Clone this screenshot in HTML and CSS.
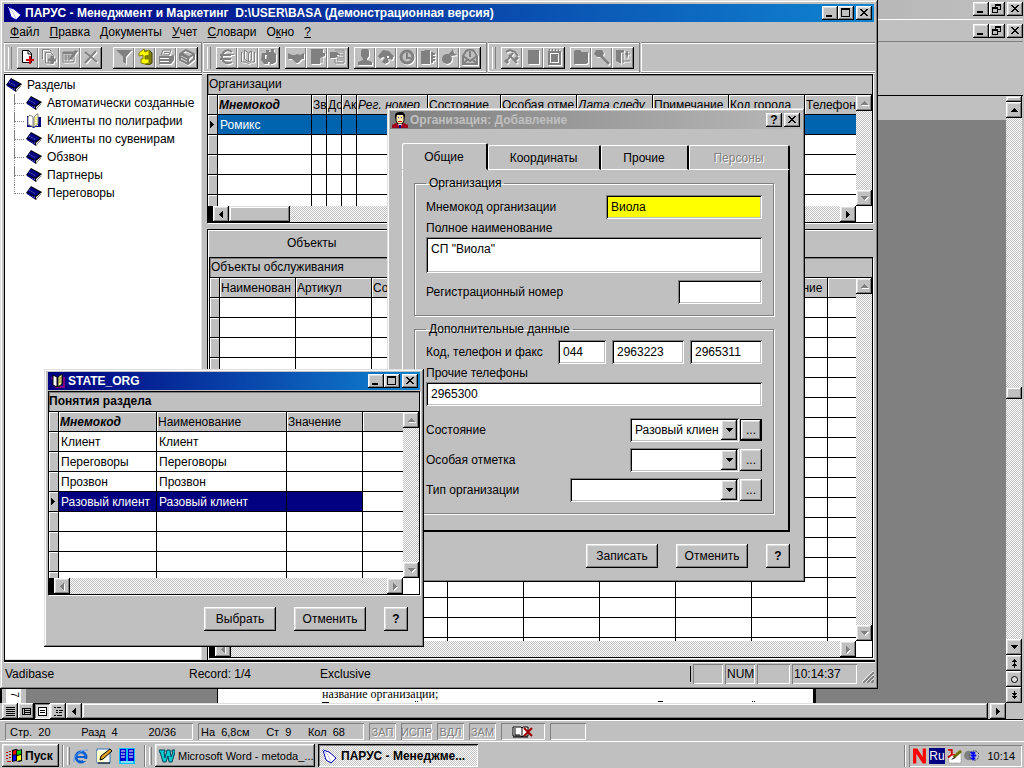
FILE: index.html
```html
<!DOCTYPE html>
<html lang="ru">

<head>
    <meta charset="UTF-8">
    <meta name="viewport" content="width=device-width, initial-scale=1.0">
    <title>ПАРУС - Менеджмент и Маркетинг</title>
    <link rel="stylesheet" href="styles.css">
</head>

<body>
    <svg class="sprite" aria-hidden="true">
        <symbol id="i-up" viewBox="0 0 7 4"><path d="M3 0h1v1h1v1h1v1h1v1H0V3h1V2h1V1h1z" /></symbol>
        <symbol id="i-down" viewBox="0 0 7 4"><path d="M0 0h7v1H6v1H5v1H4v1H3V3H2V2H1V1H0z" /></symbol>
        <symbol id="i-left" viewBox="0 0 4 7"><path d="M4 0v7H3V6H2V5H1V4H0V3h1V2h1V1h1V0z" /></symbol>
        <symbol id="i-right" viewBox="0 0 4 7"><path d="M0 0h1v1h1v1h1v1h1v1H3v1H2v1H1v1H0z" /></symbol>
        <symbol id="i-min" viewBox="0 0 10 10"><path d="M1 7h6v2H1z" /></symbol>
        <symbol id="i-max" viewBox="0 0 10 10"><path d="M0 0h9v9H0zM1 2v6h7V2z" fill-rule="evenodd" /></symbol>
        <symbol id="i-restore" viewBox="0 0 10 10"><path d="M3 0h6v6H6v3H0V3h3zM4 2v1h2v2h2V2zM1 5v3h4V5z" fill-rule="evenodd" /></symbol>
        <symbol id="i-close" viewBox="0 0 10 10"><path d="M1 1h2v1h1v1h2V2h1V1h2v1H8v1H7v1H6v1h1v1h1v1h1v1H7V7H6V6H4v1H3v1H1V7h1V6h1V5h1V4H3V3H2V2H1z" /></symbol>
        <symbol id="i-book" viewBox="0 0 16 16">
            <path d="M5 1L16 7L10 15L0 8z" fill="#000" />
            <path d="M5 2L14 7L9 11L1 7z" fill="#000080" />
            <path d="M1 8L9 12V14L1 9z" fill="#0000a0" />
            <path d="M10 12L15 8V10L10 14z" fill="#fff" />
            <path d="M3 5L10 9M6 12h3" stroke="#8080c0" stroke-dasharray="1 1" />
            <path d="M11 13L15 9" stroke="#808080" />
        </symbol>
        <symbol id="i-openbook" viewBox="0 0 16 16">
            <path d="M1 3h3v10h8V4h3v10H9l-1 1H7l-1-1H1z" fill="#000080" />
            <path d="M2 4L4 2L7 4V14L4 12H2z" fill="#fff" stroke="#808080" />
            <path d="M8 4L11 1H12V11L8 14z" fill="#ffffc0" stroke="#808080" />
            <path d="M10 4v7" stroke="#e0d000" stroke-dasharray="1 1" />
        </symbol>
        <symbol id="i-sail" viewBox="0 0 16 16">
            <path d="M1 2l6 2 7 6-5 5-5-3z" fill="#fff" stroke="#0000c0" />
            <path d="M1 2l5 5M6 7l3 7" stroke="#c0c0ff" fill="none" />
        </symbol>
    </svg>

    <div class="desktop">
        <!-- Word in the background -->
        <div class="word">
            <div class="word-title">
                <span class="win-btns">
                    <button aria-label="Свернуть"><svg><use href="#i-min" /></svg></button><button aria-label="Восстановить"><svg><use href="#i-restore" /></svg></button><button aria-label="Закрыть"><svg><use href="#i-close" /></svg></button>
                </span>
            </div>
            <div class="word-menu">
                <span class="win-btns">
                    <button aria-label="Свернуть документ"><svg><use href="#i-min" /></svg></button><button aria-label="Восстановить документ"><svg><use href="#i-restore" /></svg></button><button aria-label="Закрыть документ"><svg><use href="#i-close" /></svg></button>
                </span>
            </div>
            <div class="word-tools"></div>
            <div class="word-main">
                <div class="word-doc">
                    <div class="word-ruler-h"></div>
                    <div class="word-canvas">
                        <div class="word-ruler-v">7</div>
                        <div class="word-page">
                            <p>название организации;</p>
                            <svg class="word-next" viewBox="0 0 440 2"><path d="M0 1h7v1H0zM93 0h1v1h-1zM95 0h1v1h-1zM336 0h5v1h-5zM430 0h1v1h-1zM432 0h1v1h-1z" /></svg>
                        </div>
                    </div>
                </div>
                <div class="vscroll word-vscroll">
                    <span class="split"></span>
                    <button class="sb" aria-label="Вверх"><svg class="av"><use href="#i-up" /></svg></button>
                    <span class="track before"></span>
                    <span class="thumb-v"></span>
                    <span class="track after-thumb"></span>
                    <button class="sb" aria-label="Вниз"><svg class="av"><use href="#i-down" /></svg></button>
                    <button class="sb" aria-label="Предыдущая страница"><svg class="nav" viewBox="0 0 7 9"><path d="M3 0h1v1h1v1h1v1H4v2h1v1h1v1H4v2H3V7H1V6h1V5h1V3H1V2h1V1h1z" /></svg></button>
                    <button class="sb" aria-label="Выбор объекта"><svg class="nav" viewBox="0 0 7 9"><circle cx="3.5" cy="4.5" r="3" fill="#dfdfdf" stroke="#000" /></svg></button>
                    <button class="sb" aria-label="Следующая страница"><svg class="nav" viewBox="0 0 7 9"><path d="M3 0h1v2h2v1H5v1H4v1h2v1H5v1H4v1H3V7H2V6H1V5h2V4H2V3H1V2h2z" /></svg></button>
                </div>
            </div>
            <div class="word-bottom">
                <button class="sb" aria-label="Обычный"><svg class="view" viewBox="0 0 9 9"><path d="M0 0h9v1H0zM0 2h9v1H0zM0 4h9v1H0zM0 6h9v1H0zM0 8h9v1H0z" /></svg></button>
                <button class="sb" aria-label="Веб"><svg class="view" viewBox="0 0 9 9"><path d="M0 1h9v7H0zM1 2v5h1V2zM3 2v1h5V2zM3 4v1h5V4zM3 6v1h5V6z" fill-rule="evenodd" /></svg></button>
                <button class="sb on" aria-label="Разметка"><svg class="view" viewBox="0 0 9 9"><path d="M0 0h9v9H0z" /><path d="M1 1h7v7H1z" fill="#fff" /><path d="M2 3h5v1H2zM2 5h5v1H2z" /></svg></button>
                <button class="sb" aria-label="Структура"><svg class="view" viewBox="0 0 9 9"><path d="M0 0h2v1H0zM3 0h4v1H3zM2 3h2v1H2zM5 3h4v1H5zM2 5h2v1H2zM5 5h3v1H5zM0 8h2v1H0zM3 8h5v1H3z" /></svg></button>
                <button class="sb" aria-label="Влево"><svg class="ah"><use href="#i-left" /></svg></button>
                <span class="thumb-h wide"></span>
                <button class="sb" aria-label="Вправо"><svg class="ah"><use href="#i-right" /></svg></button>
                <span class="corner"></span>
            </div>
            <div class="word-status">
                <span class="cell pages"><span>Стр.&nbsp; 20</span><span>Разд&nbsp; 4</span><span>20/36</span></span>
                <span class="cell pos"><span>На&nbsp; 6,8см</span><span>Ст&nbsp; 9</span><span>Кол&nbsp; 68</span></span>
                <span class="cell off">ЗАП</span>
                <span class="cell off long">ИСПР</span>
                <span class="cell off">ВДЛ</span>
                <span class="cell off">ЗАМ</span>
                <span class="cell spell"><svg viewBox="0 0 22 13"><path d="M1 2h8l1 1 1-1h5v9h-5l-1 1-1-1H1z" fill="#fff" stroke="#000" /><path d="M10 3v9M3 3v7h5M1 12h15" stroke="#000" fill="none" /><path d="M12 3l8 8M20 3l-8 8" stroke="#a00000" stroke-width="2" /></svg></span>
                <span class="cell blank"></span>
            </div>
        </div>

        <!-- Taskbar -->
        <div class="taskbar">
            <button class="start"><svg viewBox="0 0 16 14"><path d="M0 3h2v1H0zM3 2h2v1H3zM0 6h2v1H0zM3 5h2v1H3zM0 9h2v1H0zM3 8h2v1H3zM1 12h4v1H1z" fill="#c00000" /><path d="M6 1l4-1 3 1 3-1v12l-3 1-3-1-4 1z" /><path d="M7 2l3-1v4L7 6z" fill="#f00" /><path d="M11 2l4-1v4l-4 1z" fill="#0c0" /><path d="M7 7l3-1v5l-3 1z" fill="#00f" /><path d="M11 7l4-1v5l-4 1z" fill="#ff0" /></svg>Пуск</button>
            <span class="bar"></span><span class="bar grip"></span>
            <span class="quick">
                <svg viewBox="0 0 16 16"><circle cx="8" cy="9" r="5" fill="none" stroke="#1060d0" stroke-width="3" /><path d="M4 9h9" stroke="#1060d0" stroke-width="2" /><path d="M10 11h6v2h-6z" fill="#c0c0c0" /><path d="M1 14C-1 9 8 1 15 2" fill="none" stroke="#60a0ff" /></svg>
                <svg viewBox="0 0 16 16"><path d="M1 1h13v14H1z" fill="#fff" stroke="#3070b0" /><path d="M1 3h10L8 14H1z" fill="#ffffc8" /><path d="M4 12l1-4 9-7 2 2-9 8z" fill="#e0a020" stroke="#000" /><path d="M2 15h12" stroke="#000" /></svg>
                <svg viewBox="0 0 16 16"><path d="M0 0h16v16H0z" fill="#00c0ff" /><path d="M1 1h6v12H1zM9 1h6v12H9z" fill="#0000d0" /><path d="M2 3h4M2 6h4M2 9h4M10 3h4M10 6h4M10 9h4M2 14h12" stroke="#fff" /></svg>
            </span>
            <span class="bar"></span><span class="bar grip"></span>
            <button class="task"><svg viewBox="0 0 16 16"><path d="M0 2h6v2H5l1 6 2-8h3l1 7 2-5h-1V2h3v2l-3 10h-3L9 8l-2 6H4L1 4H0z" fill="#0cc" stroke="#004060" /></svg>Microsoft Word - metoda_...</button>
            <button class="task active"><svg><use href="#i-sail" /></svg>ПАРУС - Менеджме...</button>
            <span class="fill"></span>
            <span class="bar"></span>
            <div class="tray">
                <svg viewBox="0 0 14 14"><path d="M1 0h4l5 8V0h3v14h-3L4 5v9H1z" fill="#f00" /></svg>
                <span class="lang">Ru</span>
                <svg viewBox="0 0 16 15"><path d="M2 4h13v11H2z" fill="#fff" stroke="#808080" stroke-dasharray="1 1" /><path d="M1 1l4 0 0 5-4 3M5 6h4" fill="none" stroke="#d00000" stroke-width="2" /><path d="M7 9l8-7" stroke="#707000" stroke-width="3" /><path d="M5 11l4-2" stroke="#000" /></svg>
                <svg viewBox="0 0 16 15"><circle cx="5" cy="7" r="5" fill="#808080" /><circle cx="11" cy="7" r="5" fill="#c0c0c0" stroke="#404040" stroke-dasharray="2 1" /><path d="M7 4h5M7 7h6M7 10h5M10 3v9" stroke="#00f" stroke-width="2" /></svg>
                <time>10:14</time>
            </div>
        </div>

        <!-- Main window -->
        <div class="window parus">
            <div class="title">
                <svg class="t-icon"><use href="#i-sail" /></svg>
                <h1>ПАРУС - Менеджмент и Маркетинг&nbsp; D:\USER\BASA (Демонстрационная версия)</h1>
                <span class="win-btns">
                    <button aria-label="Свернуть"><svg><use href="#i-min" /></svg></button><button aria-label="Развернуть"><svg><use href="#i-max" /></svg></button><button aria-label="Закрыть"><svg><use href="#i-close" /></svg></button>
                </span>
            </div>
            <nav class="menu">
                <a href="#"><u>Ф</u>айл</a>
                <a href="#"><u>П</u>равка</a>
                <a href="#"><u>Д</u>окументы</a>
                <a href="#"><u>У</u>чет</a>
                <a href="#"><u>С</u>ловари</a>
                <a href="#">О<u>к</u>но</a>
                <a href="#"><u>?</u></a>
            </nav>
            <div class="toolbars">
                <div class="toolbar first">
                    <span class="tools">
                        <button class="live" aria-label="Добавить"><svg viewBox="0 0 16 16"><path d="M2.500 1.500h6l3 3v9h-9z" fill="#fff" stroke="#000" /><path d="M8 1v4h4" fill="none" stroke="#000" /><path d="M10 7v8M6 11h8" stroke="#d00000" stroke-width="2" /></svg></button>
                        <button aria-label="Размножить"><svg viewBox="0 0 16 16"><path d="M1.500 10V.500h7l2 2M4.500 14V3.500h5l3 3V14z" fill="none" stroke="#808080" /><path d="M11 7v8M7 11h8" stroke="#808080" stroke-width="3" /></svg></button>
                        <button aria-label="Исправить"><svg viewBox="0 0 16 16"><path d="M1 3h11v10H1zM2 6h9M2 8h9M2 10h9M4 6v6M7 6v6" fill="none" stroke="#808080" /><path d="M1 3h10v2H1z" /><path d="M7 10l6-9 3 1-6 8z" /></svg></button>
                        <button aria-label="Удалить"><svg viewBox="0 0 16 16"><path d="M2 3l12 10M13 2L2 14" stroke="#808080" stroke-width="2" /></svg></button>
                    </span>
                    <span class="tools">
                        <button aria-label="Отбор"><svg viewBox="0 0 16 16"><path d="M0 1h16l-6 7v7l-3-2V8z" /></svg></button>
                        <button class="live" aria-label="Сортировка"><svg viewBox="0 0 16 16"><path d="M7 2h6l2 2v10l-3 2H9z" fill="#808000" stroke="#404000" /><path d="M2 4l5-4 1 3 4-2v5l-4 1v3h4v4l-4 1-4-1v-4h2V6L2 7z" fill="#ff0" stroke="#808000" /></svg></button>
                        <button aria-label="Печать"><svg viewBox="0 0 16 16"><path d="M5 1h8l-2 5H3z" fill="none" stroke="#808080" /><path d="M1 7h13l2-2v6l-3 4H1zM6 3h5v1H6z" /><path d="M2 9h9v1H2zM2 12h9v1H2z" fill="#fff" /></svg></button>
                        <button aria-label="Отчеты"><svg viewBox="0 0 16 16"><path d="M1 5l6-4 8 4-6 4zM1 5v6l8 4 6-5V5M9 9v6M3 4l8 5M2 8l7 4" fill="none" stroke="#808080" stroke-width="2" /></svg></button>
                    </span>
                </div>
                <div class="toolbar second">
                    <span class="tools">
                        <button aria-label="Валюты"><svg viewBox="0 0 16 16"><path d="M13 3C8-1 3 3 3 8s5 8 10 5M1 6h11M1 10h11" fill="none" stroke="#808080" stroke-width="2" /><path d="M7 5h8v1H7z" /></svg></button>
                        <button aria-label="Каталог"><svg viewBox="0 0 16 16"><path d="M1.500 3v10h5l2 2 2-2h4V3M4.500 1v9l4 3V4zM8.500 4l3-2v9l-3 2" fill="none" stroke="#808080" /></svg></button>
                        <button aria-label="Переговоры"><svg viewBox="0 0 16 16"><path d="M1 4h4V1h3v2h2V0h3v3l2 2v8l-3 2H9v-2H7v2H3l-3-4zM4 6v4h2V6z" fill-rule="evenodd" /></svg></button>
                    </span>
                    <span class="tools">
                        <button aria-label="Сделки"><svg viewBox="0 0 16 16"><path d="M0 4l4 2h3l2-1 3 1 4-2v6h-2l-4 4H8L4 10H0z" /></svg></button>
                        <button aria-label="Исходящие"><svg viewBox="0 0 16 16"><path d="M2 0h12v4h2v3l-5 2v6H2z" /><path d="M10 9h4M10 11h4M10 13h4" stroke="#808080" /></svg></button>
                        <button aria-label="Входящие"><svg viewBox="0 0 16 16"><path d="M5 1h9v13H5v-4M6 3h7M9 6h4M7 9h6M7 11h6" fill="none" stroke="#808080" /><path d="M0 3h6l4 2v1H7l1 2-3 1H0z" /></svg></button>
                    </span>
                    <span class="tools">
                        <button aria-label="Персона"><svg viewBox="0 0 16 16"><path d="M5 0h6l1 2v5l-2 3v1l5 2v3H1v-3l5-2v-1L4 7V2z" /></svg></button>
                        <button aria-label="Звонки"><svg viewBox="0 0 16 16"><path d="M0 7l5-6 6 1 5 5-2 4-4-1 1 3-4 2-3-2 3-4-2-1-3 2z" /><path d="M9 7h2v2H9z" fill="#fff" /></svg></button>
                        <button aria-label="Время"><svg viewBox="0 0 16 16"><circle cx="8" cy="8" r="6" fill="#c0c0c0" stroke="#808080" stroke-width="3" /><path d="M8 4v5h4" fill="none" stroke="#808080" stroke-width="2" /></svg></button>
                        <button aria-label="Дело"><svg viewBox="0 0 16 16"><path d="M1 2h3l1-1h5v14H1zM11 3h2v1h2v2h-2v1h2v2h-2v1h2v2h-2v2h-2z" /></svg></button>
                        <button aria-label="Заявка"><svg viewBox="0 0 16 16"><circle cx="6" cy="10" r="5" /><path d="M7 6l5-6 1 4 3 2-5 1z" /></svg></button>
                        <button aria-label="Почта"><svg viewBox="0 0 16 16"><path d="M1 7l3-5 4-2 4 2 3 5v8H1z" fill="#c0c0c0" stroke="#808080" stroke-width="2" /><path d="M1 7l7 5 7-5M1 15l5-5M15 15l-5-5M8 2v6" fill="none" stroke="#808080" stroke-width="2" /></svg></button>
                    </span>
                </div>
                <div class="toolbar third">
                    <span class="tools">
                        <button aria-label="Настройка"><svg viewBox="0 0 16 16"><path d="M2 3l4-2 5 2 3 4M9 4l-7 9M5 6l8 8" fill="none" stroke="#808080" stroke-width="2" /><path d="M10 12l4-4M1 11l3 3" stroke="#808080" stroke-width="3" /></svg></button>
                        <button aria-label="Документ"><svg viewBox="0 0 16 16"><path d="M3 1h11v14H3z" /></svg></button>
                        <button aria-label="Блокнот"><svg viewBox="0 0 16 16"><path d="M3 3h11v12H3z" fill="none" stroke="#808080" stroke-width="2" /><path d="M5 5h7v8H5zM3 0h1v2H3zM6 0h1v2H6zM9 0h1v2H9zM12 0h1v2h-1z" /></svg></button>
                    </span>
                    <span class="tools">
                        <button aria-label="Папка"><svg viewBox="0 0 16 16"><path d="M1 2l2-1h4l2 2h6v11l-2 1H1z" /></svg></button>
                        <button aria-label="Ключ"><svg viewBox="0 0 16 16"><path d="M2 1h6l2 3-1 3 7 7-2 2-8-8H3L0 5z" /></svg></button>
                        <button aria-label="Выход"><svg viewBox="0 0 16 16"><path d="M1 1h8v2l-3 1v11l-5-3z" /><path d="M8 1v13M8 12h7M10 5h5M12 2v7" fill="none" stroke="#808080" /><path d="M10 5l3-3v6z" /></svg></button>
                    </span>
                </div>
                <div class="toolbar rest"></div>
            </div>

            <div class="work">
                <div class="tree">
                    <div class="node"><svg><use href="#i-book" /></svg>Разделы</div>
                    <ul>
                        <li><svg><use href="#i-book" /></svg>Автоматически созданные</li>
                        <li><svg><use href="#i-openbook" /></svg>Клиенты по полиграфии</li>
                        <li><svg><use href="#i-book" /></svg>Клиенты по сувенирам</li>
                        <li><svg><use href="#i-book" /></svg>Обзвон</li>
                        <li><svg><use href="#i-book" /></svg>Партнеры</li>
                        <li><svg><use href="#i-book" /></svg>Переговоры</li>
                    </ul>
                </div>
                <div class="panes">
                    <section class="grid orgs">
                        <h2>Организации</h2>
                        <div class="grid-view">
                            <div class="grid-body">
                                <table data-empty="4">
                                    <colgroup>
                                        <col class="c-mark"><col class="c-code"><col class="c-flag"><col class="c-flag"><col class="c-flag"><col class="c-reg"><col class="c-state"><col class="c-std"><col class="c-std"><col class="c-std"><col class="c-std"><col>
                                    </colgroup>
                                    <thead>
                                        <tr><th></th><th class="key">Мнемокод</th><th>Зв</th><th>До</th><th>Ак</th><th class="it">Рег. номер</th><th>Состояние</th><th>Особая отме</th><th class="it">Дата следу</th><th>Примечание</th><th>Код города</th><th>Телефон</th></tr>
                                    </thead>
                                    <tbody>
                                        <tr class="picked"><td><svg class="ah"><use href="#i-right" /></svg></td><td>Ромикс</td><td></td><td></td><td></td><td></td><td></td><td></td><td></td><td></td><td></td><td></td></tr>
                                    </tbody>
                                </table>
                            </div>
                            <div class="vscroll">
                                <button class="sb dim" aria-label="Вверх"><svg class="av"><use href="#i-up" /></svg></button>
                                <span class="track"></span>
                                <button class="sb dim" aria-label="Вниз"><svg class="av"><use href="#i-down" /></svg></button>
                            </div>
                        </div>
                        <div class="hscroll">
                            <button class="sb" aria-label="Влево"><svg class="ah"><use href="#i-left" /></svg></button>
                            <span class="thumb-h"></span>
                            <span class="track"></span>
                            <button class="sb" aria-label="Вправо"><svg class="ah"><use href="#i-right" /></svg></button>
                            <span class="corner"></span>
                        </div>
                    </section>
                    <section class="objects">
                        <div class="objects-tab"><span>Объекты</span></div>
                        <div class="grid">
                            <h2>Объекты обслуживания</h2>
                            <div class="grid-view">
                                <div class="grid-body">
                                    <table data-empty="40">
                                        <colgroup>
                                            <col class="c-mark"><col class="c-std"><col class="c-std"><col class="c-std"><col class="c-std"><col class="c-std"><col class="c-std"><col class="c-std"><col class="c-std"><col>
                                        </colgroup>
                                        <thead>
                                            <tr><th></th><th>Наименован</th><th>Артикул</th><th>Состояние</th><th></th><th></th><th></th><th></th><th class="end">Примечание</th><th></th></tr>
                                        </thead>
                                        <tbody></tbody>
                                    </table>
                                </div>
                                <div class="vscroll">
                                    <button class="sb dim" aria-label="Вверх"><svg class="av"><use href="#i-up" /></svg></button>
                                    <span class="track"></span>
                                    <button class="sb dim" aria-label="Вниз"><svg class="av"><use href="#i-down" /></svg></button>
                                </div>
                            </div>
                            <div class="hscroll">
                                <button class="sb dim" aria-label="Влево"><svg class="ah"><use href="#i-left" /></svg></button>
                                <span class="track"></span>
                                <button class="sb dim" aria-label="Вправо"><svg class="ah"><use href="#i-right" /></svg></button>
                                <span class="corner"></span>
                            </div>
                        </div>
                    </section>
                </div>
            </div>

            <div class="status">
                <span class="s-base">Vadibase</span>
                <span class="s-rec">Record: 1/4</span>
                <span class="s-mode">Exclusive</span>
                <span class="cell s-a"></span>
                <span class="cell s-a">NUM</span>
                <span class="cell s-b"></span>
                <span class="cell s-time">10:14:37</span>
                <svg class="sizer" viewBox="0 0 12 12"><path d="M0 12L12 0M4 12L12 4M8 12L12 8" stroke="#fff" stroke-width="2" /><path d="M1 12L12 1M5 12L12 5M9 12L12 9" stroke="#808080" stroke-width="2" /></svg>
            </div>
        </div>

        <!-- Organization dialog -->
        <form class="window org" onsubmit="return false">
            <div class="title idle">
                <svg class="t-icon" viewBox="0 0 16 16"><path d="M0 13l4-2h8l4 2v3H0z" fill="#a00020" /><path d="M4 2h8v7l-2 3H6L4 9z" fill="#ffe0b0" stroke="#000" /><path d="M3 4l1-3 3-1h4l2 3v3l-2-3H5L3 7z" /><path d="M6 5h1v1H6zM9 5h1v1H9z" fill="#00f" /><path d="M6 9h4v1H6z" fill="#d00000" /><path d="M6 12h4l-2 4z" fill="#fff" /><path d="M7 13h2v3H7z" fill="#000080" /></svg>
                <h2>Организация: Добавление</h2>
                <span class="win-btns">
                    <button aria-label="Справка"><b>?</b></button><button aria-label="Закрыть"><svg><use href="#i-close" /></svg></button>
                </span>
            </div>
            <div class="tabs">
                <button class="tab active">Общие</button>
                <button class="tab t-coord">Координаты</button>
                <button class="tab t-other">Прочие</button>
                <button class="tab t-pers" disabled>Персоны</button>
            </div>
            <div class="tab-page">
                <fieldset>
                    <legend>Организация</legend>
                    <div class="row">
                        <label for="code">Мнемокод организации</label>
                        <input id="code" class="w-code required" type="text" value="Виола">
                    </div>
                    <label class="above" for="fullname">Полное наименование</label>
                    <textarea id="fullname">СП "Виола"</textarea>
                    <div class="row after">
                        <label for="regnum">Регистрационный номер</label>
                        <input id="regnum" class="w-reg" type="text">
                    </div>
                </fieldset>
                <fieldset>
                    <legend>Дополнительные данные</legend>
                    <div class="row">
                        <label for="area">Код, телефон и факс</label>
                        <span class="phones">
                            <input id="area" class="w-area" type="text" value="044">
                            <input class="w-phone" type="text" value="2963223" aria-label="Телефон">
                            <input class="w-phone" type="text" value="2965311" aria-label="Факс">
                        </span>
                    </div>
                    <label class="above" for="phones">Прочие телефоны</label>
                    <input id="phones" class="w-full" type="text" value="2965300">
                    <div class="row combo-row">
                        <label for="state">Состояние</label>
                        <span class="combo"><select id="state"><option>Разовый клиен</option></select><span class="sb"><svg class="av"><use href="#i-down" /></svg></span></span>
                        <button class="more focus" aria-label="Выбрать состояние">...</button>
                    </div>
                    <div class="row combo-row">
                        <label for="mark">Особая отметка</label>
                        <span class="combo"><select id="mark"><option></option></select><span class="sb"><svg class="av"><use href="#i-down" /></svg></span></span>
                        <button class="more" aria-label="Выбрать отметку">...</button>
                    </div>
                    <div class="row combo-row">
                        <label for="kind">Тип организации</label>
                        <span class="combo long"><select id="kind"><option></option></select><span class="sb"><svg class="av"><use href="#i-down" /></svg></span></span>
                        <button class="more" aria-label="Выбрать тип">...</button>
                    </div>
                </fieldset>
            </div>
            <div class="actions">
                <button>Записать</button>
                <button>Отменить</button>
                <button class="help">?</button>
            </div>
        </form>

        <!-- Dictionary window -->
        <div class="window dict">
            <div class="title">
                <svg class="t-icon" viewBox="0 0 16 16"><path d="M1 4h2v9h10V4h2v11H5z" fill="#800080" /><path d="M3 2l4 2v10l-4-2z" fill="#fff" stroke="#000" /><path d="M8 4l4-3v10l-4 3z" fill="#ffffa0" stroke="#000" /><path d="M10 4v6" stroke="#808000" /></svg>
                <h2>STATE_ORG</h2>
                <span class="win-btns">
                    <button aria-label="Свернуть"><svg><use href="#i-min" /></svg></button><button aria-label="Развернуть"><svg><use href="#i-max" /></svg></button><button aria-label="Закрыть"><svg><use href="#i-close" /></svg></button>
                </span>
            </div>
            <div class="grid">
                <h2 class="strong">Понятия раздела</h2>
                <div class="grid-view">
                    <div class="grid-body">
                        <table data-empty="4">
                            <colgroup>
                                <col class="c-mark"><col class="c-key"><col class="c-name"><col class="c-std"><col>
                            </colgroup>
                            <thead>
                                <tr><th></th><th class="key">Мнемокод</th><th>Наименование</th><th>Значение</th><th></th></tr>
                            </thead>
                            <tbody>
                                <tr><td></td><td>Клиент</td><td>Клиент</td><td></td><td></td></tr>
                                <tr><td></td><td>Переговоры</td><td>Переговоры</td><td></td><td></td></tr>
                                <tr><td></td><td>Прозвон</td><td>Прозвон</td><td></td><td></td></tr>
                                <tr class="picked"><td><svg class="ah"><use href="#i-right" /></svg></td><td>Разовый клиент</td><td>Разовый клиент</td><td></td><td></td></tr>
                            </tbody>
                        </table>
                    </div>
                    <div class="vscroll">
                        <button class="sb dim" aria-label="Вверх"><svg class="av"><use href="#i-up" /></svg></button>
                        <span class="track"></span>
                        <button class="sb dim" aria-label="Вниз"><svg class="av"><use href="#i-down" /></svg></button>
                    </div>
                </div>
                <div class="hscroll">
                    <button class="sb dim" aria-label="Влево"><svg class="ah"><use href="#i-left" /></svg></button>
                    <span class="track"></span>
                    <button class="sb dim" aria-label="Вправо"><svg class="ah"><use href="#i-right" /></svg></button>
                    <span class="corner"></span>
                </div>
            </div>
            <div class="actions">
                <button>Выбрать</button>
                <button>Отменить</button>
                <button class="help">?</button>
            </div>
        </div>
    </div>

    <script>
        // pad every grid with empty rows
        document.querySelectorAll("table[data-empty]").forEach(table => {
            let cols = table.querySelectorAll("col").length;
            let body = table.querySelector("tbody");
            for (let i = 0; i < Number(table.dataset.empty); i++) {
                let row = body.insertRow();
                for (let c = 0; c < cols; c++) row.insertCell();
            }
        });
    </script>
</body>

</html>
```

FILE: styles.css
```css
* {
    box-sizing: border-box;
}

body {
    margin: 0;
    font: 12px/16px "Liberation Sans", Arial, sans-serif;
    color: #000;
    background: #808080;
}

h1, h2, p, ul {
    margin: 0;
    padding: 0;
    font-size: 12px;
    font-weight: normal;
}

button, input, select, textarea {
    font: inherit;
    color: #000;
    margin: 0;
    border: 0;
    border-radius: 0;
    background: #c0c0c0;
}

button {
    padding: 0;
}

svg {
    display: block;
    flex: none;
    width: 16px;
    height: 16px;
}

.sprite {
    position: absolute;
    width: 0;
    height: 0;
}

.desktop {
    position: relative;
    display: flex;
    flex-direction: column;
    height: 100vh;
    overflow: hidden;
}

/* shared window parts */

.window {
    position: absolute;
    display: flex;
    flex-direction: column;
    padding: 3px 4px;
    background: #c0c0c0;
    box-shadow: inset -1px -1px #000, inset 1px 1px #dfdfdf, inset -2px -2px #808080, inset 2px 2px #fff;
}

.title {
    display: flex;
    align-items: center;
    flex: none;
    height: 18px;
    padding: 0 2px;
    color: #fff;
    background: linear-gradient(to right, #000080, #1084d0);
}

.title.idle {
    color: #c0c0c0;
    background: linear-gradient(to right, #808080, #b8b8b8);
}

.title h1,
.title h2 {
    flex: 1;
    font-weight: bold;
    white-space: nowrap;
    overflow: hidden;
}

.t-icon {
    margin-right: 2px;
}

.win-btns {
    display: flex;
}

.win-btns button {
    display: flex;
    align-items: center;
    justify-content: center;
    width: 16px;
    height: 14px;
    line-height: 14px;
}

.win-btns button:last-child {
    margin-left: 2px;
}

.win-btns svg {
    width: 10px;
    height: 10px;
}

.win-btns button,
.sb,
.start,
.task,
.actions button,
.more {
    background: #c0c0c0;
    box-shadow: inset -1px -1px #000, inset 1px 1px #fff, inset -2px -2px #808080, inset 2px 2px #dfdfdf;
}

.cell {
    display: flex;
    align-items: center;
    box-shadow: inset 1px 1px #808080, inset -1px -1px #fff;
}

/* scroll bars */

.sb {
    display: flex;
    align-items: center;
    justify-content: center;
    flex: none;
    width: 16px;
    height: 16px;
}

.av {
    width: 7px;
    height: 4px;
}

.ah {
    width: 4px;
    height: 7px;
}

.dim svg {
    fill: #808080;
    filter: drop-shadow(1px 1px 0 #fff);
}

.track {
    flex: 1;
    background: repeating-conic-gradient(#fff 0 25%, #c0c0c0 0 50%) 0 0 / 2px 2px;
}

.track.before {
    flex: 27;
}

.track.after-thumb {
    flex: 24;
}

.vscroll {
    display: flex;
    flex-direction: column;
    flex: none;
    width: 16px;
}

.hscroll {
    display: flex;
    flex: none;
    height: 16px;
    border-left: 5px solid #000;
}

.thumb-h,
.thumb-v,
.split {
    background: #c0c0c0;
    box-shadow: inset -1px -1px #000, inset 1px 1px #dfdfdf, inset -2px -2px #808080, inset 2px 2px #fff;
}

.thumb-h {
    width: 61px;
}

.thumb-h.wide {
    flex: 1;
    margin-right: 2px;
}

.thumb-v {
    height: 12px;
}

.split {
    height: 6px;
}

.corner {
    flex: none;
    width: 16px;
    background: #fff;
}

/* Word */

.word {
    display: flex;
    flex-direction: column;
    flex: 1;
    min-height: 0;
    padding-right: 1px;
    background: #c0c0c0;
}

.word-title,
.word-menu {
    display: flex;
    align-items: center;
    justify-content: flex-end;
    flex: none;
    height: 19px;
}

.word-title {
    padding-bottom: 2px;
    background: linear-gradient(to right, #808080, #c0c0c0);
}

.word-menu {
    height: 23px;
    border-top: 1px solid #fff;
    border-bottom: 1px solid #808080;
}

.word-tools {
    flex: none;
    height: 53px;
}

.word-main {
    display: flex;
    flex: 1;
    min-height: 0;
    border-top: 1px solid #000;
}

.word-doc {
    display: flex;
    flex-direction: column;
    flex: 1;
    border-left: 2px solid #000;
    background: #808080;
}

.word-ruler-h {
    height: 24px;
    background: #c0c0c0;
}

.word-canvas {
    display: flex;
    flex: 1;
}

.word-ruler-v {
    display: flex;
    width: 24px;
    border-left: 4px solid #c0c0c0;
    border-right: 5px solid #c0c0c0;
    background: #fff;
    font-size: 10px;
    line-height: 14px;
    writing-mode: vertical-rl;
    justify-content: flex-end;
    padding-bottom: 5px;
}

.word-page {
    display: flex;
    flex-direction: column;
    justify-content: flex-end;
    flex: 0 1 599px;
    margin-left: 191px;
    padding-left: 104px;
    border-left: 1px solid #000;
    border-right: 3px solid #000;
    background: #fff;
}

.word-page p {
    font: 12px/13px "Liberation Serif", "Times New Roman", serif;
}

.word-next {
    width: 440px;
    height: 2px;
}

.word-vscroll {
    width: 17px;
    padding-right: 1px;
}

.nav {
    width: 7px;
    height: 9px;
}

.word-bottom {
    display: flex;
    flex: none;
    height: 17px;
    padding-left: 2px;
    border-bottom: 1px solid #000;
}

.word-bottom .corner {
    width: 17px;
    background: #c0c0c0;
}

.view {
    width: 9px;
    height: 9px;
}

.sb.on {
    background: #dfdfdf;
    box-shadow: inset 1px 1px #000, inset -1px -1px #fff, inset 2px 2px #808080;
}

.word-status {
    display: flex;
    align-items: stretch;
    flex: none;
    gap: 5px;
    height: 21px;
    padding: 2px 5px 1px;
    border-top: 1px solid #fff;
    white-space: nowrap;
}

.word-status .cell {
    justify-content: center;
    width: 27px;
    font-size: 11px;
}

.word-status .off {
    color: #808080;
    text-shadow: 1px 1px #fff;
}

.word-status .long {
    width: 31px;
}

.word-status .pages,
.word-status .pos {
    justify-content: space-between;
    width: 188px;
    padding: 0 17px 0 5px;
}

.word-status .pos {
    width: 166px;
    padding: 0 19px 0 3px;
}

.word-status .spell {
    width: 44px;
}

.word-status .blank {
    width: 36px;
}

.spell svg {
    width: 22px;
    height: 13px;
}

/* taskbar */

.taskbar {
    display: flex;
    align-items: center;
    flex: none;
    gap: 3px;
    height: 27px;
    padding: 2px 2px 1px;
    border-top: 1px solid #fff;
    background: #c0c0c0;
}

.start,
.task {
    display: flex;
    align-items: center;
    gap: 3px;
    height: 23px;
    white-space: nowrap;
}

.start {
    width: 57px;
    padding-left: 4px;
    font-weight: bold;
}

.task {
    width: 160px;
    padding-left: 4px;
    font-size: 11px;
}

.task.active {
    font-size: 12px;
    font-weight: bold;
    background: repeating-conic-gradient(#fff 0 25%, #c0c0c0 0 50%) 0 0 / 2px 2px;
    box-shadow: inset 1px 1px #000, inset -1px -1px #fff, inset 2px 2px #808080;
}

.bar {
    width: 2px;
    height: 22px;
    border-left: 1px solid #808080;
    border-right: 1px solid #fff;
}

.bar.grip {
    width: 3px;
    height: 18px;
    border-left-color: #fff;
    border-right-color: #808080;
}

.quick {
    display: flex;
    gap: 7px;
    padding-right: 6px;
}

.fill {
    flex: 1;
}

.tray {
    display: flex;
    align-items: center;
    gap: 2px;
    width: 113px;
    height: 22px;
    padding: 0 7px 0 3px;
    box-shadow: inset 1px 1px #808080, inset -1px -1px #fff;
}

.tray svg {
    width: 15px;
}

.lang {
    width: 16px;
    color: #fff;
    background: #000080;
    text-align: center;
}

.tray time {
    flex: 1;
    font-size: 11px;
    text-align: right;
}

/* main window */

.parus {
    top: 0;
    left: 0;
    right: 146px;
    bottom: 79px;
    padding: 4px 3px 3px 4px;
}

.parus .title {
    margin-right: 1px;
    padding-left: 3px;
}

.menu {
    display: flex;
    flex: none;
    gap: 10px;
    height: 20px;
    padding: 2px 6px;
}

.menu a {
    color: inherit;
    text-decoration: none;
}

.toolbars {
    display: flex;
    flex: none;
    gap: 1px;
    height: 31px;
}

.toolbar {
    display: flex;
    align-items: center;
    gap: 5px;
    padding-left: 4px;
    border-top: 1px solid #808080;
    border-bottom: 1px solid #808080;
    border-right: 1px solid #808080;
    box-shadow: inset 1px 1px #fff, inset 0 -1px #fff;
}

.toolbar::before {
    content: "";
    width: 2px;
    height: 22px;
    border-left: 1px solid #fff;
    border-right: 1px solid #808080;
}

.first {
    width: 198px;
}

.first .tools:first-child {
    margin-right: 6px;
}

.second {
    width: 284px;
}

.third {
    width: 152px;
}

.rest {
    flex: 1;
    border-right: 0;
}

.rest::before {
    display: none;
}

.tools {
    display: flex;
    border-right: 1px solid #000;
    border-bottom: 1px solid #000;
}

.tools button {
    display: flex;
    align-items: center;
    justify-content: center;
    width: 21px;
    height: 21px;
    box-shadow: inset 1px 1px #fff, inset -1px -1px #808080;
}

.tools svg {
    fill: #808080;
    filter: drop-shadow(1px 1px 0 #fff);
}

.tools .live svg {
    filter: none;
}

.work {
    display: flex;
    flex: 1;
    gap: 5px;
    min-height: 0;
    border-top: 1px solid #fff;
    border-bottom: 2px solid #000;
}

.tree {
    flex: none;
    width: 198px;
    overflow: hidden;
    padding: 2px 0 0 2px;
    background: #fff;
    box-shadow: inset 1px 1px #000, inset -1px -1px #dfdfdf;
    white-space: nowrap;
}

.node,
.tree li {
    display: flex;
    align-items: center;
    gap: 5px;
    height: 18px;
}

.tree ul {
    margin-left: 8px;
    list-style: none;
}

/* dotted connector lines */
.tree li::before {
    content: "";
    align-self: flex-start;
    width: 9px;
    height: 9px;
    margin-right: -3px;
    border-left: 1px dotted #808080;
    border-bottom: 1px dotted #808080;
}

.tree li:not(:last-child) {
    background: repeating-linear-gradient(#808080 0 1px, #fff 1px 2px) 0 0 / 1px 100% no-repeat;
}

.panes {
    display: flex;
    flex-direction: column;
    flex: 1;
    gap: 6px;
    min-width: 0;
    padding-right: 2px;
}

/* grids */

.grid {
    display: flex;
    flex-direction: column;
    flex: 1;
    min-height: 0;
    border: 1px solid #000;
    box-shadow: 1px 1px #fff;
}

.grid h2 {
    flex: none;
    height: 20px;
    padding: 1px 0 0 1px;
    border-bottom: 1px solid #000;
    box-shadow: inset 1px 1px #808080;
}

.grid .strong {
    padding-left: 0;
    font-weight: bold;
}

.grid-view {
    display: flex;
    flex: 1;
    min-height: 0;
}

.grid-body {
    flex: 1;
    min-width: 0;
    overflow: hidden;
    background: #fff;
}

table {
    width: 100%;
    table-layout: fixed;
    border-collapse: separate;
    border-spacing: 0;
}

th, td {
    height: 20px;
    padding: 0 0 0 2px;
    border-right: 1px solid #000;
    border-bottom: 1px solid #000;
    font-weight: normal;
    line-height: 16px;
    text-align: left;
    white-space: nowrap;
    overflow: hidden;
}

th {
    padding-left: 1px;
    background: #c0c0c0;
    box-shadow: inset 1px 1px #fff;
}

th:last-child,
td:last-child {
    border-right: 0;
}

td:first-child {
    background: #c0c0c0;
    box-shadow: inset 1px 1px #fff;
}

.key {
    font-weight: bold;
    font-style: italic;
}

.it {
    font-style: italic;
}

.end {
    direction: rtl;
}

.picked td:not(:first-child) {
    color: #fff;
    background: #0063ad;
}

.dict .picked td:not(:first-child) {
    background: #000080;
}

.dict .picked td:last-child {
    background: #fff;
}

.c-mark { width: 10px; }
.c-code { width: 94px; }
.c-flag { width: 15px; }
.c-reg { width: 71px; }
.c-state { width: 73px; }
.c-std { width: 76px; }
.c-key { width: 98px; }
.c-name { width: 130px; }

.orgs {
    flex: 0 0 149px;
}

.objects {
    display: flex;
    flex-direction: column;
    flex: 1;
    min-height: 0;
    padding: 0 0 2px 1px;
    border: 1px solid #000;
    border-right: 0;
    border-bottom: 0;
    box-shadow: inset 1px 1px #fff;
}

.objects-tab {
    flex: none;
    height: 27px;
    padding: 5px 0 0 78px;
}

/* status line */

.status {
    display: flex;
    align-items: center;
    flex: none;
    gap: 2px;
    height: 24px;
    padding: 1px 1px 3px;
    border-top: 1px solid #fff;
}

.s-base {
    width: 182px;
}

.s-rec {
    width: 129px;
}

.s-mode {
    flex: 1;
    border-right: 1px solid #000;
}

.status .cell {
    height: 20px;
    padding-left: 2px;
}

.s-a { width: 30px; }
.s-b { width: 33px; }
.s-time { width: 65px; }

.sizer {
    align-self: flex-end;
    width: 12px;
    height: 12px;
    margin-left: 3px;
}

/* organization dialog */

.org {
    top: 108px;
    left: 387px;
    width: 418px;
    padding: 3px;
}

.tabs {
    display: flex;
    align-items: flex-end;
    height: 41px;
    padding: 0 12px;
}

.tab {
    height: 25px;
    border-top: 1px solid #fff;
    border-bottom: 1px solid #fff;
    border-right: 2px solid #000;
    border-radius: 2px 2px 0 0;
    box-shadow: inset 1px 0 #fff;
}

.tab.active {
    width: 86px;
    height: 27px;
    border-bottom-color: #c0c0c0;
}

.t-coord { width: 113px; }
.t-other { width: 88px; }
.t-pers { flex: 1; }

.tab:disabled {
    color: #808080;
    text-shadow: 1px 1px #fff;
}

.tab-page {
    margin: 0 12px;
    padding: 5px 14px 16px 11px;
    border-left: 1px solid #fff;
    border-right: 2px solid #000;
    border-bottom: 2px solid #000;
}

fieldset {
    min-width: 0;
    margin: 0 0 5px;
    padding: 4px 11px 11px;
    border: 1px solid #808080;
    box-shadow: 1px 1px #fff, inset 1px 1px #fff;
}

fieldset:last-child {
    margin-bottom: 0;
    padding-top: 3px;
}

legend {
    padding: 0 3px;
}

.row {
    display: flex;
    align-items: center;
    justify-content: space-between;
    height: 24px;
}

.after {
    margin-top: 7px;
}

.above {
    display: block;
    height: 18px;
    padding-top: 1px;
}

input, textarea, .combo {
    height: 24px;
    padding: 0 5px;
    background: #fff;
    box-shadow: inset 1px 1px #808080, inset -1px -1px #fff, inset 2px 2px #000, inset -2px -2px #c0c0c0;
}

textarea {
    display: block;
    width: 100%;
    height: 36px;
    padding-top: 4px;
    resize: none;
    overflow: hidden;
}

.required {
    background: #ff0;
}

.phones {
    display: flex;
    gap: 6px;
}

.w-code { width: 156px; }
.w-reg { width: 84px; }
.w-area { width: 48px; }
.w-phone { width: 72px; }
.w-full { width: 100%; }

.combo-row {
    gap: 1px;
    margin-top: 6px;
}

.w-full + .combo-row {
    margin-top: 12px;
}

.combo-row label {
    flex: 1;
}

.combo {
    display: flex;
    width: 109px;
    padding: 2px 2px 2px 5px;
}

.combo.long {
    width: 169px;
}

.combo select {
    flex: 1;
    min-width: 0;
    appearance: none;
    background: transparent;
    text-overflow: clip;
}

.combo .sb {
    height: 20px;
}

.more {
    width: 22px;
    height: 22px;
}

.more.focus {
    border: 1px solid #000;
}

.actions {
    display: flex;
    justify-content: flex-end;
    gap: 18px;
    padding: 12px 12px 11px;
}

.actions button {
    width: 72px;
    height: 24px;
}

.actions .help {
    width: 24px;
    font-weight: bold;
}

/* dictionary window */

.dict {
    top: 369px;
    left: 44px;
    width: 380px;
}

.dict .grid {
    flex: none;
    height: 204px;
    margin-top: 1px;
}

.dict .actions {
    padding: 12px 12px 13px;
}
```
